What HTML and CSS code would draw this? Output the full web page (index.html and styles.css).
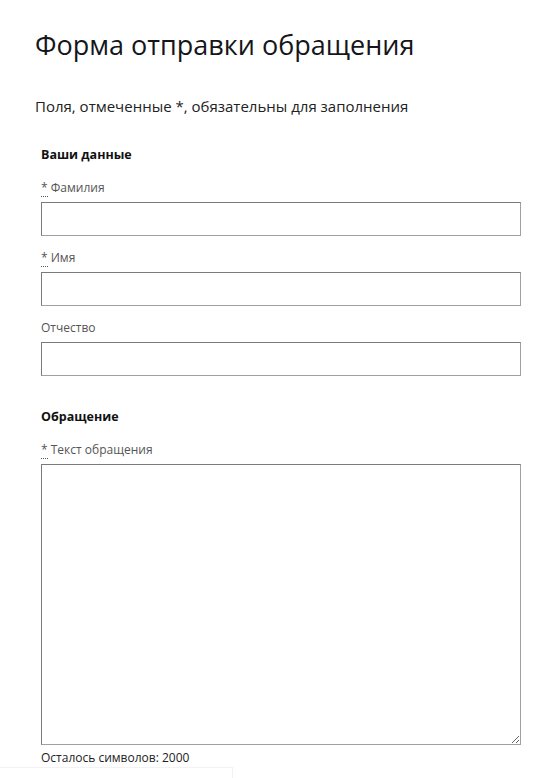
FILE: index.html
```html
<!DOCTYPE html>
<html lang="ru">
<head>
<meta charset="utf-8">
<title>Форма отправки обращения</title>
<link rel="stylesheet" href="styles.css">
</head>
<body>
<div class="page">
  <h1 class="title">Форма отправки обращения</h1>
  <p class="note">Поля, отмеченные *, обязательны для заполнения</p>
  <form class="form">
    <section class="group">
      <h2 class="group-title">Ваши данные</h2>
      <div class="field">
        <label class="label"><abbr class="req">*</abbr> Фамилия</label>
        <input class="input" type="text">
      </div>
      <div class="field">
        <label class="label"><abbr class="req">*</abbr> Имя</label>
        <input class="input" type="text">
      </div>
      <div class="field">
        <label class="label">Отчество</label>
        <input class="input" type="text">
      </div>
    </section>
    <section class="group group-second">
      <h2 class="group-title">Обращение</h2>
      <div class="field">
        <label class="label"><abbr class="req">*</abbr> Текст обращения</label>
        <textarea class="textarea"></textarea>
        <div class="counter">Осталось символов: 2000</div>
      </div>
    </section>
  </form>
  <div class="footer-hint"></div>
</div>
</body>
</html>
```

FILE: styles.css
```css
html, body {
  margin: 0;
  padding: 0;
  background: #ffffff;
}
.page {
  padding: 28px 0 0 35px;
  font-family: "Open Sans", "Liberation Sans", sans-serif;
  color: #1a1a1a;
}
.title {
  margin: 0;
  font-size: 27px;
  line-height: 34px;
  font-weight: 400;
  color: #15151a;
}
.note {
  margin: 33px 0 0 0;
  font-size: 15px;
  line-height: 22px;
  color: #222;
}
.form {
  margin-top: 29px;
  padding-left: 6px;
  width: 480px;
}
.group-title {
  margin: 0 0 16px 0;
  font-size: 12.5px;
  line-height: 18px;
  font-weight: 700;
  color: #111;
}
.group-second {
  margin-top: 32px;
}
.field {
  display: flex;
  flex-direction: column;
  margin-bottom: 14px;
}
.label {
  font-size: 12px;
  line-height: 16px;
  color: #555;
  margin-bottom: 6px;
}
.req {
  text-decoration: none;
  border-bottom: 1px dotted #555;
}
.input {
  box-sizing: border-box;
  height: 34px;
  width: 480px;
  margin: 0;
  border: 1px solid #a0a0a0;
  border-top-color: #7a7a7a;
  border-left-color: #7a7a7a;
  background: #fff;
}
.textarea {
  box-sizing: border-box;
  display: block;
  width: 480px;
  height: 281px;
  margin: 0;
  border: 1px solid #a0a0a0;
  border-top-color: #7a7a7a;
  border-left-color: #7a7a7a;
  background: #fff;
}
.counter {
  margin-top: 5px;
  font-size: 12px;
  line-height: 16px;
  color: #222;
}
.footer-hint {
  position: absolute;
  left: 0;
  top: 767px;
  width: 232px;
  height: 11px;
  border-top: 1px solid #f2f2f2;
  border-right: 1px solid #f2f2f2;
}
```
